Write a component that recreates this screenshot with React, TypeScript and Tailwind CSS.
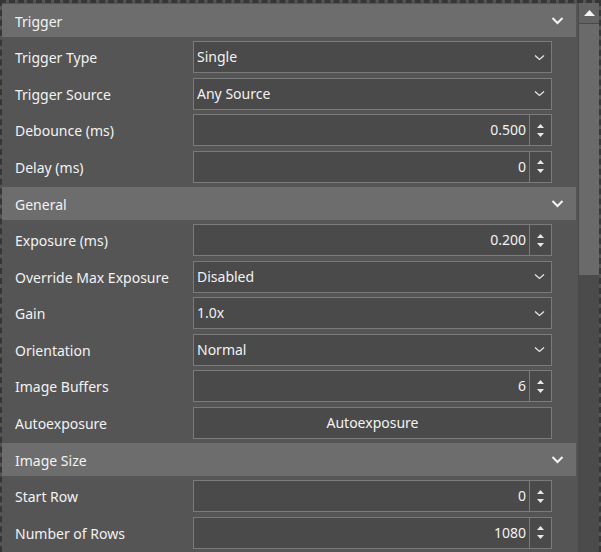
import { ReactNode } from "react";

type Row =
  | { label: string; kind: "select"; value: string }
  | { label: string; kind: "number"; value: string }
  | { label: string; kind: "button"; value: string };

const sections: { title: string; rows: Row[] }[] = [
  {
    title: "Trigger",
    rows: [
      { label: "Trigger Type", kind: "select", value: "Single" },
      { label: "Trigger Source", kind: "select", value: "Any Source" },
      { label: "Debounce (ms)", kind: "number", value: "0.500" },
      { label: "Delay (ms)", kind: "number", value: "0" },
    ],
  },
  {
    title: "General",
    rows: [
      { label: "Exposure (ms)", kind: "number", value: "0.200" },
      { label: "Override Max Exposure", kind: "select", value: "Disabled" },
      { label: "Gain", kind: "select", value: "1.0x" },
      { label: "Orientation", kind: "select", value: "Normal" },
      { label: "Image Buffers", kind: "number", value: "6" },
      { label: "Autoexposure", kind: "button", value: "Autoexposure" },
    ],
  },
  {
    title: "Image Size",
    rows: [
      { label: "Start Row", kind: "number", value: "0" },
      { label: "Number of Rows", kind: "number", value: "1080" },
    ],
  },
];

function Chevron({ big }: { big?: boolean }) {
  return big ? (
    <svg width="13" height="9" viewBox="0 0 13 9" aria-hidden="true">
      <path d="M1.5 2 L6.5 7 L11.5 2" fill="none" stroke="#f4f4f4" strokeWidth="2" />
    </svg>
  ) : (
    <svg width="11" height="7" viewBox="0 0 11 7" aria-hidden="true">
      <path d="M1 1.5 L5.5 5.5 L10 1.5" fill="none" stroke="#e6e6e6" strokeWidth="1.3" />
    </svg>
  );
}

function Box({ children, className = "" }: { children: ReactNode; className?: string }) {
  return (
    <div className={`flex h-[32px] w-[359px] items-center border-[1.5px] border-[#7b7b7b] bg-[#4a4a4a] ${className}`}>
      {children}
    </div>
  );
}

function Field({ row }: { row: Row }) {
  if (row.kind === "select")
    return (
      <Box className="justify-between pl-[3px] pr-[6px]">
        <span>{row.value}</span>
        <Chevron />
      </Box>
    );
  if (row.kind === "button")
    return (
      <Box className="justify-center">
        <span>{row.value}</span>
      </Box>
    );
  return (
    <Box>
      <span className="flex-1 pr-[3px] text-right">{row.value}</span>
      <div className="flex h-full w-[22px] flex-col items-center justify-center gap-[5px] border-l-[1.5px] border-[#7b7b7b]">
        <svg width="7" height="4" viewBox="0 0 7 4" aria-hidden="true">
          <path d="M0 4 L3.5 0 L7 4 Z" fill="#e8e8e8" />
        </svg>
        <svg width="7" height="4" viewBox="0 0 7 4" aria-hidden="true">
          <path d="M0 0 L3.5 4 L7 0 Z" fill="#e8e8e8" />
        </svg>
      </div>
    </Box>
  );
}

export default function App() {
  return (
    <div
      className="flex h-[552px] w-[601px] overflow-hidden border-x-2 border-t-[3px] border-dashed border-[#363636] bg-[#555555] text-[14px] leading-none text-[#f2f2f2]"
      style={{ fontFamily: '"Noto Sans", "Open Sans", sans-serif' }}
    >
      <div className="flex-1 pt-[1px] pr-[2px]">
        {sections.map((s) => (
          <section key={s.title}>
            <div className="flex h-[33px] items-center justify-between bg-[#6d6d6d] pl-[13px] pr-[12px]">
              <span className="pt-[2px]">{s.title}</span>
              <Chevron big />
            </div>
            <div className="py-[2px]">
              {s.rows.map((r) => (
                <div key={r.label} className="flex h-[36.5px] items-center pl-[13px]">
                  <span className="w-[178px] shrink-0 pt-[2px]">{r.label}</span>
                  <Field row={r} />
                </div>
              ))}
            </div>
          </section>
        ))}
      </div>
      <div className="flex w-[21px] flex-col border-l border-[#4a4a4a] bg-[#4b4b4b]">
        <div className="flex h-[21px] items-center justify-center border-b border-[#4a4a4a] bg-[#636363]">
          <svg width="11" height="6" viewBox="0 0 11 6" aria-hidden="true">
            <path d="M0 6 L5.5 0 L11 6 Z" fill="#f4f4f4" />
          </svg>
        </div>
        <div className="h-[251px] bg-[#6a6a6a]" />
      </div>
    </div>
  );
}
